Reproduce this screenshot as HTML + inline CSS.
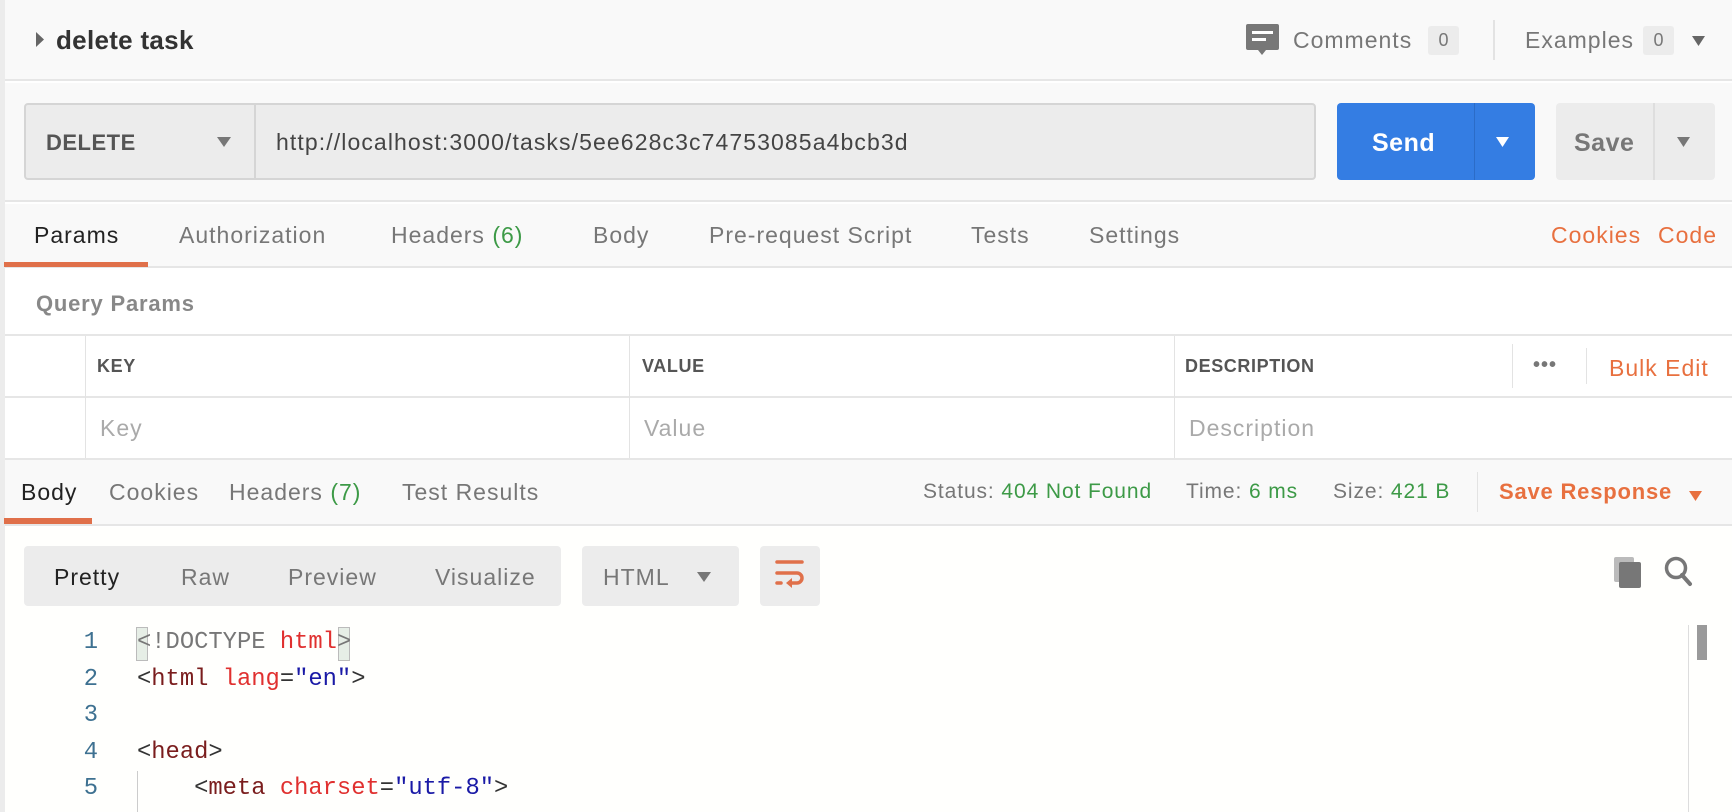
<!DOCTYPE html>
<html><head><meta charset="utf-8"><style>
*{margin:0;padding:0;box-sizing:border-box}
body{width:1732px;height:812px;overflow:hidden;background:#fff;font-family:"Liberation Sans",sans-serif;position:relative;color:#333}
.a{position:absolute;white-space:nowrap}
.f20{font-size:23px;letter-spacing:1px}
.g{color:#3d9a47}
.o{color:#e8703f}
.gr{color:#777}
.mono{font-family:"Liberation Mono",monospace;font-size:23.8px}
</style></head><body>
<div class="a" style="left:0;top:0;width:5px;height:812px;background:#ececec"></div>
<div class="a" style="left:5px;top:0;width:1727px;height:81px;background:#f9f9f9;border-bottom:2px solid #e6e6e6"></div>
<svg class="a" style="left:36px;top:32px" width="9" height="15"><polygon points="0,0 8,7.5 0,15" fill="#666"/></svg>
<div class="a" style="left:56px;top:25px;font-size:26px;font-weight:bold;color:#333;letter-spacing:.3px">delete task</div>
<svg class="a" style="left:1246px;top:24px" width="33" height="32"><path d="M2 0h29a2 2 0 0 1 2 2v22a2 2 0 0 1-2 2H20l-4 5-4-5H2a2 2 0 0 1-2-2V2a2 2 0 0 1 2-2z" fill="#777"/><rect x="6" y="7" width="21" height="3" fill="#fff"/><rect x="6" y="14" width="14" height="3" fill="#fff"/></svg>
<div class="a f20 gr" style="left:1293px;top:27px">Comments</div>
<div class="a gr" style="left:1428px;top:26px;width:31px;height:29px;background:#ececec;border-radius:3px;text-align:center;line-height:29px;font-size:18px">0</div>
<div class="a" style="left:1493px;top:20px;width:2px;height:40px;background:#e3e3e3"></div>
<div class="a f20 gr" style="left:1525px;top:27px">Examples</div>
<div class="a gr" style="left:1643px;top:26px;width:31px;height:29px;background:#ececec;border-radius:3px;text-align:center;line-height:29px;font-size:18px">0</div>
<svg class="a" style="left:1692px;top:36px" width="13" height="10"><polygon points="0,0 13,0 6.5,10" fill="#666"/></svg>

<div class="a" style="left:5px;top:83px;width:1727px;height:119px;background:#f9f9f9;border-bottom:2px solid #e6e6e6"></div>
<div class="a" style="left:24px;top:103px;width:1292px;height:77px;background:#ececec;border:2px solid #d5d5d5;border-radius:4px"></div>
<div class="a" style="left:254px;top:105px;width:2px;height:73px;background:#d5d5d5"></div>
<div class="a" style="left:46px;top:130px;font-size:22px;font-weight:bold;color:#555;letter-spacing:.5px">DELETE</div>
<svg class="a" style="left:217px;top:137px" width="14" height="10"><polygon points="0,0 14,0 7,10" fill="#777"/></svg>
<div class="a" style="left:276px;top:129px;font-size:23px;color:#444;letter-spacing:1.1px">http://localhost:3000/tasks/5ee628c3c74753085a4bcb3d</div>
<div class="a" style="left:1337px;top:103px;width:198px;height:77px;background:#347de3;border-radius:4px"></div>
<div class="a" style="left:1474px;top:103px;width:1px;height:77px;background:#2b6cc8"></div>
<div class="a" style="left:1372px;top:129px;font-size:25px;font-weight:bold;color:#fff;letter-spacing:.5px">Send</div>
<svg class="a" style="left:1496px;top:137px" width="13" height="10"><polygon points="0,0 13,0 6.5,10" fill="#fff"/></svg>
<div class="a" style="left:1556px;top:103px;width:159px;height:77px;background:#ececec;border-radius:4px"></div>
<div class="a" style="left:1653px;top:103px;width:2px;height:77px;background:#dedede"></div>
<div class="a" style="left:1574px;top:129px;font-size:25px;font-weight:bold;color:#777;letter-spacing:.5px">Save</div>
<svg class="a" style="left:1677px;top:137px" width="13" height="10"><polygon points="0,0 13,0 6.5,10" fill="#777"/></svg>

<div class="a" style="left:5px;top:204px;width:1727px;height:64px;background:#f9f9f9;border-bottom:2px solid #e6e6e6"></div>
<div class="a" style="left:4px;top:262px;width:144px;height:5px;background:#e0704a"></div>
<div class="a f20" style="left:34px;top:222px;color:#222">Params</div>
<div class="a f20 gr" style="left:179px;top:222px">Authorization</div>
<div class="a f20 gr" style="left:391px;top:222px">Headers <span class="g">(6)</span></div>
<div class="a f20 gr" style="left:593px;top:222px">Body</div>
<div class="a f20 gr" style="left:709px;top:222px">Pre-request Script</div>
<div class="a f20 gr" style="left:971px;top:222px">Tests</div>
<div class="a f20 gr" style="left:1089px;top:222px">Settings</div>
<div class="a f20 o" style="left:1551px;top:222px">Cookies</div>
<div class="a f20 o" style="left:1658px;top:222px">Code</div>

<div class="a" style="left:36px;top:291px;font-size:22px;font-weight:bold;color:#888;letter-spacing:.8px">Query Params</div>
<div class="a" style="left:5px;top:334px;width:1727px;height:2px;background:#e6e6e6"></div>
<div class="a" style="left:5px;top:396px;width:1727px;height:2px;background:#e6e6e6"></div>
<div class="a" style="left:5px;top:458px;width:1727px;height:2px;background:#e6e6e6"></div>
<div class="a" style="left:85px;top:336px;width:1px;height:122px;background:#e3e3e3"></div>
<div class="a" style="left:629px;top:336px;width:1px;height:122px;background:#e3e3e3"></div>
<div class="a" style="left:1174px;top:336px;width:1px;height:122px;background:#e3e3e3"></div>
<div class="a" style="left:1512px;top:344px;width:1px;height:44px;background:#e3e3e3"></div>
<div class="a" style="left:1586px;top:348px;width:1px;height:36px;background:#e3e3e3"></div>
<div class="a" style="left:97px;top:356px;font-size:18px;font-weight:bold;color:#555;letter-spacing:.6px">KEY</div>
<div class="a" style="left:642px;top:356px;font-size:18px;font-weight:bold;color:#555;letter-spacing:.6px">VALUE</div>
<div class="a" style="left:1185px;top:356px;font-size:18px;font-weight:bold;color:#555;letter-spacing:.6px">DESCRIPTION</div>
<div class="a" style="left:1533px;top:354px;font-size:20px;font-weight:bold;color:#777;letter-spacing:1px">•••</div>
<div class="a f20 o" style="left:1609px;top:355px">Bulk Edit</div>
<div class="a f20" style="left:100px;top:415px;color:#aaa">Key</div>
<div class="a f20" style="left:644px;top:415px;color:#aaa">Value</div>
<div class="a f20" style="left:1189px;top:415px;color:#aaa">Description</div>

<div class="a" style="left:5px;top:460px;width:1727px;height:66px;background:#f9f9f9;border-bottom:2px solid #e6e6e6"></div>
<div class="a" style="left:4px;top:518px;width:88px;height:6px;background:#e0704a"></div>
<div class="a f20" style="left:21px;top:479px;color:#222">Body</div>
<div class="a f20 gr" style="left:109px;top:479px">Cookies</div>
<div class="a f20 gr" style="left:229px;top:479px">Headers <span class="g">(7)</span></div>
<div class="a f20 gr" style="left:402px;top:479px">Test Results</div>
<div class="a" style="left:923px;top:480px;font-size:21px;color:#777;letter-spacing:.9px">Status: <span class="g">404 Not Found</span></div>
<div class="a" style="left:1186px;top:480px;font-size:21px;color:#777;letter-spacing:.9px">Time: <span class="g">6 ms</span></div>
<div class="a" style="left:1333px;top:480px;font-size:21px;color:#777;letter-spacing:.9px">Size: <span class="g">421 B</span></div>
<div class="a" style="left:1477px;top:472px;width:1px;height:40px;background:#e3e3e3"></div>
<div class="a o" style="left:1499px;top:479px;font-size:22px;font-weight:bold;letter-spacing:.8px">Save Response</div>
<svg class="a" style="left:1689px;top:491px" width="13" height="10"><polygon points="0,0 13,0 6.5,10" fill="#e8703f"/></svg>

<div class="a" style="left:5px;top:527px;width:1727px;height:285px;background:#fffffd"></div>
<div class="a" style="left:24px;top:546px;width:537px;height:60px;background:#ececec;border-radius:4px"></div>
<div class="a f20" style="left:54px;top:564px;color:#222">Pretty</div>
<div class="a f20 gr" style="left:181px;top:564px">Raw</div>
<div class="a f20 gr" style="left:288px;top:564px">Preview</div>
<div class="a f20 gr" style="left:435px;top:564px">Visualize</div>
<div class="a" style="left:582px;top:546px;width:157px;height:60px;background:#ececec;border-radius:4px"></div>
<div class="a f20 gr" style="left:603px;top:564px">HTML</div>
<svg class="a" style="left:697px;top:572px" width="14" height="10"><polygon points="0,0 14,0 7,10" fill="#777"/></svg>
<div class="a" style="left:760px;top:546px;width:60px;height:60px;background:#ececec;border-radius:4px"></div>
<svg class="a" style="left:774px;top:559px" width="32" height="34"><g stroke="#e0704a" stroke-width="3.5" fill="none" stroke-linecap="round"><path d="M3 3h25"/><path d="M3 14h20a5 5 0 0 1 0 10h-7"/><path d="M3 24h4"/></g><polygon points="18,19 12,24 18,29" fill="#e0704a"/></svg>
<svg class="a" style="left:1614px;top:557px" width="30" height="32"><rect x="0" y="0" width="20" height="25" rx="2" fill="#bbb"/><rect x="5" y="5" width="22" height="26" rx="2" fill="#777"/></svg>
<svg class="a" style="left:1664px;top:556px" width="30" height="32"><circle cx="12" cy="12" r="9.5" stroke="#777" stroke-width="3.5" fill="none"/><path d="M18 19l8 9" stroke="#777" stroke-width="4" stroke-linecap="round"/></svg>

<div class="a" style="left:1688px;top:625px;width:1px;height:187px;background:#ddd"></div>
<div class="a" style="left:1697px;top:625px;width:10px;height:35px;background:#9a9a9a"></div>

<div class="a mono" style="left:62px;top:625px;width:36px;text-align:right;line-height:36.5px;color:#3e7191">1<br>2<br>3<br>4<br>5</div>
<div class="a" style="left:137px;top:771px;width:1px;height:41px;background:#ccc"></div>
<div class="a" style="left:136px;top:627px;width:12px;height:34px;background:#e6eee6;border:1px solid #bbb"></div>
<div class="a" style="left:338px;top:627px;width:12px;height:34px;background:#e6eee6;border:1px solid #bbb"></div>
<div class="a mono" style="left:137px;top:625px;line-height:36.5px;color:#333">
<span style="color:#777">&lt;!DOCTYPE </span><span style="color:#e0302f">html</span><span style="color:#777">&gt;</span><br>
&lt;<span style="color:#7a1d1d">html</span> <span style="color:#e0302f">lang</span>=<span style="color:#1a1aa6">"en"</span>&gt;<br>
&nbsp;<br>
&lt;<span style="color:#7a1d1d">head</span>&gt;<br>
&nbsp;&nbsp;&nbsp;&nbsp;&lt;<span style="color:#7a1d1d">meta</span> <span style="color:#e0302f">charset</span>=<span style="color:#1a1aa6">"utf-8"</span>&gt;
</div>
</body></html>
